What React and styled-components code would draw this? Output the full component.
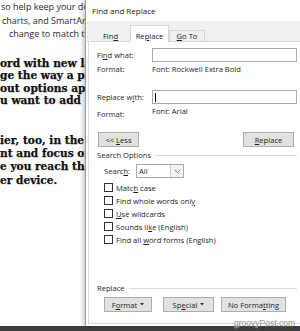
import React from "react";
import styled, { createGlobalStyle } from "styled-components";

const Global = createGlobalStyle`
  html, body { margin: 0; padding: 0; background: #fff; overflow: hidden; }
`;

const ui = `"Open Sans", "Noto Sans", sans-serif`;

const Screen = styled.div`
  position: relative;
  width: 300px;
  height: 331px;
  display: flex;
  flex-direction: column;
  overflow: hidden;
  background: #fff;
`;

const Workspace = styled.div`
  flex: 1;
  display: flex;
  min-height: 0;
`;

const Doc = styled.div`
  width: 85px;
  flex: none;
  overflow: hidden;
  color: #2a2a2a;
`;

const Para = styled.div`
  margin-top: ${(p) => p.$top || 0}px;
`;

const Line = styled.div`
  white-space: nowrap;
  font-family: ${ui};
  font-size: 9px;
  height: 13.5px;
  line-height: 13.5px;
  padding-left: ${(p) => p.$indent || 0}px;
`;

const HeavyLine = styled.div`
  white-space: nowrap;
  font-family: "DejaVu Serif", serif;
  font-weight: 700;
  font-size: 10.6px;
  color: #111;
  -webkit-text-stroke: 0.25px #111;
  height: ${(p) => p.$h || 12.6}px;
  line-height: ${(p) => p.$h || 12.6}px;
`;

const Dialog = styled.div`
  flex: 1;
  display: flex;
  flex-direction: column;
  background: #fff;
  border-left: 1px solid #9c9c9c;
  box-shadow: -2px 0 4px rgba(0, 0, 0, 0.22);
  padding: 0 0 2px 1px;
  font-family: ${ui};
  font-size: 7.6px;
  color: #1e1e1e;
  z-index: 1;
`;

const TitleBar = styled.div`
  height: 21px;
  display: flex;
  align-items: center;
  padding-left: 5px;
  font-size: 8px;
  color: #222;
`;

const TabStrip = styled.div`
  height: 20px;
  display: flex;
  align-items: flex-end;
  padding-left: 4px;
  background: #f0f0f0;
  border-bottom: 1px solid #d6d6d6;
`;

const Tab = styled.div`
  width: ${(p) => p.$w}px;
  height: ${(p) => (p.$active ? 17 : 11)}px;
  margin-bottom: ${(p) => (p.$active ? -1 : 0)}px;
  display: flex;
  justify-content: center;
  align-items: ${(p) => (p.$active ? "flex-end" : "center")};
  padding-bottom: ${(p) => (p.$active ? 1 : 0)}px;
  box-sizing: border-box;
  background: ${(p) => (p.$active ? "#fff" : "transparent")};
  border: 1px solid ${(p) => (p.$active || p.$edge ? "#d6d6d6" : "transparent")};
  border-bottom: none;
  color: #222;
`;

const Panel = styled.div`
  flex: 1;
  margin-left: 1px;
  border-left: 1px solid #dadada;
  border-bottom: 1px solid #dadada;
  padding: 6px 3px 0 8px;
  display: flex;
  flex-direction: column;
`;

const FieldRow = styled.div`
  display: grid;
  grid-template-columns: 55px 1fr;
  align-items: ${(p) => (p.$top ? "start" : "center")};
  height: 14px;
  margin-top: ${(p) => p.$mt || 0}px;
`;

const Label = styled.span`
  line-height: 14px;
  white-space: nowrap;
  padding-top: ${(p) => p.$pt || 0}px;
`;

const TextBox = styled.div`
  height: 14px;
  box-sizing: border-box;
  border: 1px solid #a9a9a9;
  display: flex;
  align-items: center;
  padding-left: 2px;
`;

const Caret = styled.span`
  width: 1px;
  height: 9px;
  background: #000;
`;

const Key = styled.u`
  text-decoration-thickness: 0.6px;
  text-underline-offset: 1px;
`;

const ButtonRow = styled.div`
  display: flex;
  justify-content: ${(p) => (p.$between ? "space-between" : "flex-start")};
  margin-top: ${(p) => p.$mt || 0}px;
  padding-left: ${(p) => p.$indent || 0}px;
  padding-right: ${(p) => p.$right || 0}px;
`;

const Button = styled.div`
  width: ${(p) => p.$w}px;
  height: 15px;
  box-sizing: border-box;
  background: #e1e1e1;
  border: 1px solid #adadad;
  display: flex;
  align-items: center;
  justify-content: center;
  gap: 3px;
  color: #1e1e1e;
  white-space: nowrap;
  margin-right: ${(p) => p.$mr || 0}px;
`;

const GroupTitle = styled.div`
  display: flex;
  align-items: center;
  gap: 4px;
  height: 14px;
  margin-top: ${(p) => p.$mt || 0}px;
  &::after {
    content: "";
    flex: 1;
    height: 1px;
    background: #dcdcdc;
  }
`;

const SearchRow = styled.div`
  display: flex;
  align-items: center;
  height: 14px;
  margin-top: 2px;
  padding-left: 7px;
`;

const SearchLabel = styled.span`
  width: 32px;
`;

const Select = styled.div`
  width: 48px;
  height: 14px;
  box-sizing: border-box;
  border: 1px solid #a9a9a9;
  display: flex;
  align-items: stretch;
`;

const SelectValue = styled.span`
  flex: 1;
  padding-left: 2px;
  line-height: 12px;
`;

const SelectArrow = styled.span`
  width: 12px;
  border-left: 1px solid #c8c8c8;
  background: #f4f4f4;
  display: flex;
  align-items: center;
  justify-content: center;
`;

const Checks = styled.div`
  margin-top: 3px;
  padding-left: 7px;
  display: flex;
  flex-direction: column;
`;

const CheckRow = styled.div`
  height: 13px;
  display: flex;
  align-items: center;
  gap: 3px;
  white-space: nowrap;
`;

const Box = styled.span`
  width: 9px;
  height: 9px;
  box-sizing: border-box;
  border: 1px solid #333;
  background: #fff;
`;

const Taskbar = styled.div`
  height: 5px;
  flex: none;
  background: #3e3e3e;
`;

const Watermark = styled.div`
  position: absolute;
  right: 5px;
  bottom: 3px;
  font-family: "Liberation Sans", sans-serif;
  font-size: 8.5px;
  color: #8e8e8e;
  text-shadow: 0 0 2px #fff;
  z-index: 2;
`;

const Drop = () => (
  <svg width="4" height="3" viewBox="0 0 4 3">
    <path d="M0 0h4L2 2.5z" fill="#333" />
  </svg>
);

const Chevron = () => (
  <svg width="7" height="5" viewBox="0 0 7 5">
    <path d="M0.8 1l2.7 2.6L6.2 1" fill="none" stroke="#666" strokeWidth="0.9" />
  </svg>
);

const options = [
  <>Matc<Key>h</Key> case</>,
  <>Find whole words onl<Key>y</Key></>,
  <><Key>U</Key>se wildcards</>,
  <>Sounds li<Key>k</Key>e (English)</>,
  <>Find all <Key>w</Key>ord forms (English)</>,
];

export default function App() {
  return (
    <>
      <Global />
      <Screen>
        <Workspace>
          <Doc>
            <Para>
              <Line $indent={1}>so help keep your document</Line>
              <Line $indent={2}>charts, and SmartArt</Line>
              <Line $indent={9}>change to match the</Line>
            </Para>
            <Para $top={16}>
              <HeavyLine>ord with new layout</HeavyLine>
              <HeavyLine>ge the way a picture</HeavyLine>
              <HeavyLine>out options appear</HeavyLine>
              <HeavyLine>u want to add</HeavyLine>
            </Para>
            <Para $top={27}>
              <HeavyLine $h={13.3}>ier, too, in the new</HeavyLine>
              <HeavyLine $h={13.3}>nt and focus on</HeavyLine>
              <HeavyLine $h={13.3}>e you reach the</HeavyLine>
              <HeavyLine $h={13.3}>er device.</HeavyLine>
            </Para>
          </Doc>
          <Dialog>
            <TitleBar>Find and Replace</TitleBar>
            <TabStrip>
              <Tab $w={39}><span>Fin<Key>d</Key></span></Tab>
              <Tab $w={39} $active><span>Re<Key>p</Key>lace</span></Tab>
              <Tab $w={36} $edge><span><Key>G</Key>o To</span></Tab>
            </TabStrip>
            <Panel>
              <FieldRow>
                <Label>Fi<Key>n</Key>d what:</Label>
                <TextBox />
              </FieldRow>
              <FieldRow>
                <Label>Format:</Label>
                <Label>Font: Rockwell Extra Bold</Label>
              </FieldRow>
              <FieldRow $mt={14}>
                <Label>Replace w<Key>i</Key>th:</Label>
                <TextBox>
                  <Caret />
                </TextBox>
              </FieldRow>
              <FieldRow $top>
                <Label $pt={3}>Format:</Label>
                <Label>Font: Arial</Label>
              </FieldRow>
              <ButtonRow $between $mt={14} $indent={1} $right={3}>
                <Button $w={41}><span>&lt;&lt; <Key>L</Key>ess</span></Button>
                <Button $w={51}><span><Key>R</Key>eplace</span></Button>
              </ButtonRow>
              <GroupTitle $mt={1}>Search Options</GroupTitle>
              <SearchRow>
                <SearchLabel>Searc<Key>h</Key>:</SearchLabel>
                <Select>
                  <SelectValue>All</SelectValue>
                  <SelectArrow>
                    <Chevron />
                  </SelectArrow>
                </Select>
              </SearchRow>
              <Checks>
                {options.map((o, i) => (
                  <CheckRow key={i}>
                    <Box />
                    <span>{o}</span>
                  </CheckRow>
                ))}
              </Checks>
              <GroupTitle $mt={35}>Replace</GroupTitle>
              <ButtonRow $mt={2} $indent={7}>
                <Button $w={48} $mr={11}>
                  <span>F<Key>o</Key>rmat</span>
                  <Drop />
                </Button>
                <Button $w={51} $mr={7}>
                  <span>Sp<Key>e</Key>cial</span>
                  <Drop />
                </Button>
                <Button $w={65}>
                  <span>No Forma<Key>t</Key>ting</span>
                </Button>
              </ButtonRow>
            </Panel>
          </Dialog>
        </Workspace>
        <Taskbar />
        <Watermark>groovyPost.com</Watermark>
      </Screen>
    </>
  );
}
